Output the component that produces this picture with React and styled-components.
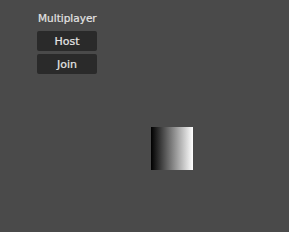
import React from 'react'
import styled, { createGlobalStyle } from 'styled-components'

const GlobalStyle = createGlobalStyle`
  html, body {
    margin: 0;
    padding: 0;
    background: #4a4a4a;
  }
`

const Stage = styled.div`
  width: 289px;
  height: 232px;
  background: #4a4a4a;
  font-family: "DejaVu Sans", sans-serif;
  overflow: hidden;
`

const Menu = styled.div`
  display: flex;
  flex-direction: column;
  align-items: stretch;
  gap: 3px;
  width: 60px;
  padding: 11px 0 0 37px;
`

const Title = styled.div`
  color: #e4e4e4;
  font-size: 10.5px;
  line-height: 14px;
  margin-bottom: 3px;
  padding-left: 1px;
  white-space: nowrap;
  -webkit-text-stroke: 0.2px #e4e4e4;
`

const MenuButton = styled.div`
  height: 20px;
  border-radius: 2px;
  background: #2a2a2a;
  color: #e6e6e6;
  font-size: 11px;
  display: flex;
  align-items: center;
  justify-content: center;
  -webkit-text-stroke: 0.2px #e6e6e6;
`

const Sprite = styled.div`
  width: 42px;
  height: 43px;
  margin: 53px 0 0 151px;
  background: linear-gradient(to right, #000 0%, #fff 100%);
`

export default function App() {
  return (
    <Stage>
      <GlobalStyle />
      <Menu>
        <Title>Multiplayer</Title>
        <MenuButton>Host</MenuButton>
        <MenuButton>Join</MenuButton>
      </Menu>
      <Sprite />
    </Stage>
  )
}
